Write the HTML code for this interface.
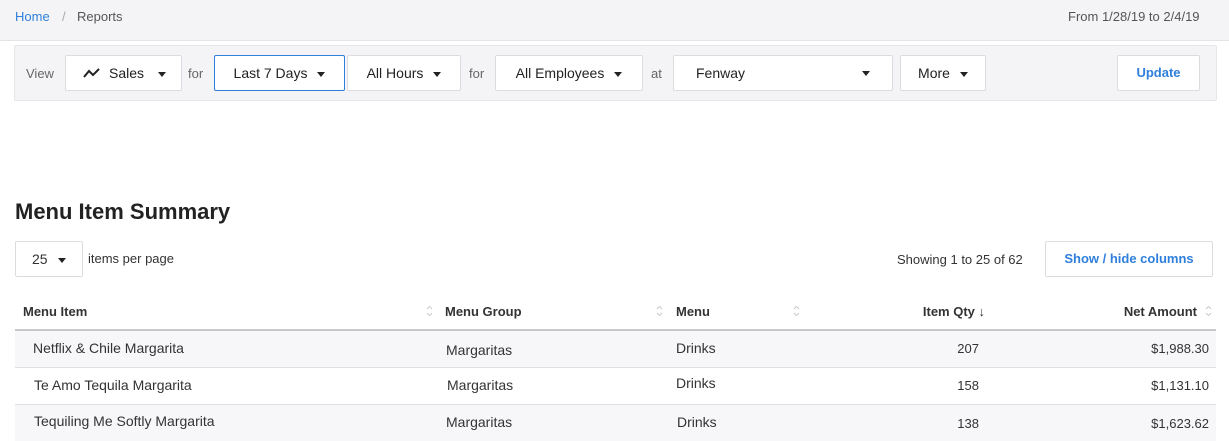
<html><head><style>
body{margin:0;width:1229px;height:441px;overflow:hidden;background:#fff;font-family:"Liberation Sans",sans-serif;color:#333;position:relative}
.a{position:absolute}
.btn{position:absolute;top:55px;height:34px;background:#fff;border:1px solid #dcdce0;border-radius:2px;font-size:14px;color:#222;line-height:34px;box-sizing:content-box}
.car{display:inline-block;width:0;height:0;border-left:4px solid transparent;border-right:4px solid transparent;border-top:5px solid #222;vertical-align:middle;margin-left:10px}
.lbl{position:absolute;top:66px;font-size:13px;color:#666}
.th{position:absolute;top:304px;font-size:13px;font-weight:bold;color:#333}
.td{position:absolute;font-size:14px;color:#333}
.r{position:absolute;font-size:13px;color:#333;text-align:right;width:200px}
.sort{position:absolute;top:305px}
</style></head><body>
<div class="a" style="left:0;top:0;width:1229px;height:40px;background:#f4f4f6;border-bottom:1px solid #e4e4e8"></div>
<div class="a" style="left:15px;top:9px;font-size:13px;color:#2f7fdc">Home</div>
<div class="a" style="left:62px;top:9px;font-size:13px;color:#aaa">/</div>
<div class="a" style="left:77px;top:9px;font-size:13px;color:#555">Reports</div>
<div class="a" style="left:1068px;top:9px;font-size:13px;color:#555">From 1/28/19 to 2/4/19</div>
<div class="a" style="left:14px;top:45px;width:1201px;height:54px;background:#f4f4f6;border:1px solid #e6e6ea;border-radius:2px"></div>
<div class="lbl" style="left:26px">View</div>
<div class="btn" style="left:65px;width:115px;"><svg style="position:absolute;left:17px;top:11px" width="18" height="12"><path d="M1 10 L6 4 L10 8 L16 2" stroke="#222" stroke-width="2" fill="none"/></svg><span style="position:absolute;left:43px">Sales<span class="car" style="margin-left:14px"></span></span></div>
<div class="lbl" style="left:188px">for</div>
<div class="btn" style="left:214px;width:129px;border-color:#2f7fdc;text-align:center">Last 7 Days<span class="car"></span></div>
<div class="btn" style="left:347px;width:112px;text-align:center">All Hours<span class="car"></span></div>
<div class="lbl" style="left:469px">for</div>
<div class="btn" style="left:495px;width:146px;text-align:center">All Employees<span class="car"></span></div>
<div class="lbl" style="left:651px">at</div>
<div class="btn" style="left:673px;width:218px;"><span style="position:absolute;left:22px">Fenway</span><span class="car" style="position:absolute;left:188px;top:15px;margin:0"></span></div>
<div class="btn" style="left:900px;width:84px;text-align:center">More<span class="car"></span></div>
<div class="btn" style="left:1117px;width:81px;text-align:center;font-weight:bold;font-size:13px;color:#2f7fdc">Update</div>
<div class="a" style="left:15px;top:199px;font-size:22px;font-weight:bold;color:#222">Menu Item Summary</div>
<div class="a" style="left:15px;top:241px;width:66px;height:34px;border:1px solid #dcdce0;border-radius:2px;font-size:14px;line-height:34px"><span style="margin-left:16px">25</span><span class="car"></span></div>
<div class="a" style="left:88px;top:251px;font-size:13px;color:#333">items per page</div>
<div class="a" style="left:897px;top:252px;font-size:13px;color:#333">Showing 1 to 25 of 62</div>
<div class="a" style="left:1045px;top:241px;width:166px;height:34px;border:1px solid #dcdce0;border-radius:2px;font-size:13px;line-height:34px;text-align:center;font-weight:bold;color:#2f7fdc">Show / hide columns</div>
<div class="th" style="left:23px">Menu Item</div>
<div class="th" style="left:445px">Menu Group</div>
<div class="th" style="left:676px">Menu</div>
<div class="th" style="left:785px;width:200px;text-align:right">Item Qty ↓</div>
<div class="th" style="left:997px;width:200px;text-align:right">Net Amount</div>
<svg class="sort" style="left:426px" width="7" height="12"><path d="M1 4 L3.5 1.5 L6 4 M1 8 L3.5 10.5 L6 8" stroke="#ccc" fill="none"/></svg>
<svg class="sort" style="left:656px" width="7" height="12"><path d="M1 4 L3.5 1.5 L6 4 M1 8 L3.5 10.5 L6 8" stroke="#ccc" fill="none"/></svg>
<svg class="sort" style="left:793px" width="7" height="12"><path d="M1 4 L3.5 1.5 L6 4 M1 8 L3.5 10.5 L6 8" stroke="#ccc" fill="none"/></svg>
<svg class="sort" style="left:1205px" width="7" height="12"><path d="M1 4 L3.5 1.5 L6 4 M1 8 L3.5 10.5 L6 8" stroke="#ccc" fill="none"/></svg>
<div class="a" style="left:15px;top:329px;width:1201px;height:2px;background:#c8c8cc"></div>
<div class="a" style="left:15px;top:331px;width:1201px;height:36px;background:#f7f7f9;border-bottom:1px solid #e0e0e4"></div>
<div class="a" style="left:15px;top:368px;width:1201px;height:36px;background:#fff;border-bottom:1px solid #e0e0e4"></div>
<div class="a" style="left:15px;top:405px;width:1201px;height:36px;background:#f7f7f9"></div>
<div class="td" style="left:33px;top:340px">Netflix &amp; Chile Margarita</div>
<div class="td" style="left:446px;top:342px">Margaritas</div>
<div class="td" style="left:676px;top:340px">Drinks</div>
<div class="r" style="left:779px;top:341px">207</div>
<div class="r" style="left:1009px;top:341px">$1,988.30</div>
<div class="td" style="left:34px;top:377px">Te Amo Tequila Margarita</div>
<div class="td" style="left:447px;top:377px">Margaritas</div>
<div class="td" style="left:676px;top:375px">Drinks</div>
<div class="r" style="left:779px;top:378px">158</div>
<div class="r" style="left:1009px;top:378px">$1,131.10</div>
<div class="td" style="left:34px;top:413px">Tequiling Me Softly Margarita</div>
<div class="td" style="left:446px;top:414px">Margaritas</div>
<div class="td" style="left:677px;top:414px">Drinks</div>
<div class="r" style="left:779px;top:416px">138</div>
<div class="r" style="left:1009px;top:416px">$1,623.62</div>
</body></html>
